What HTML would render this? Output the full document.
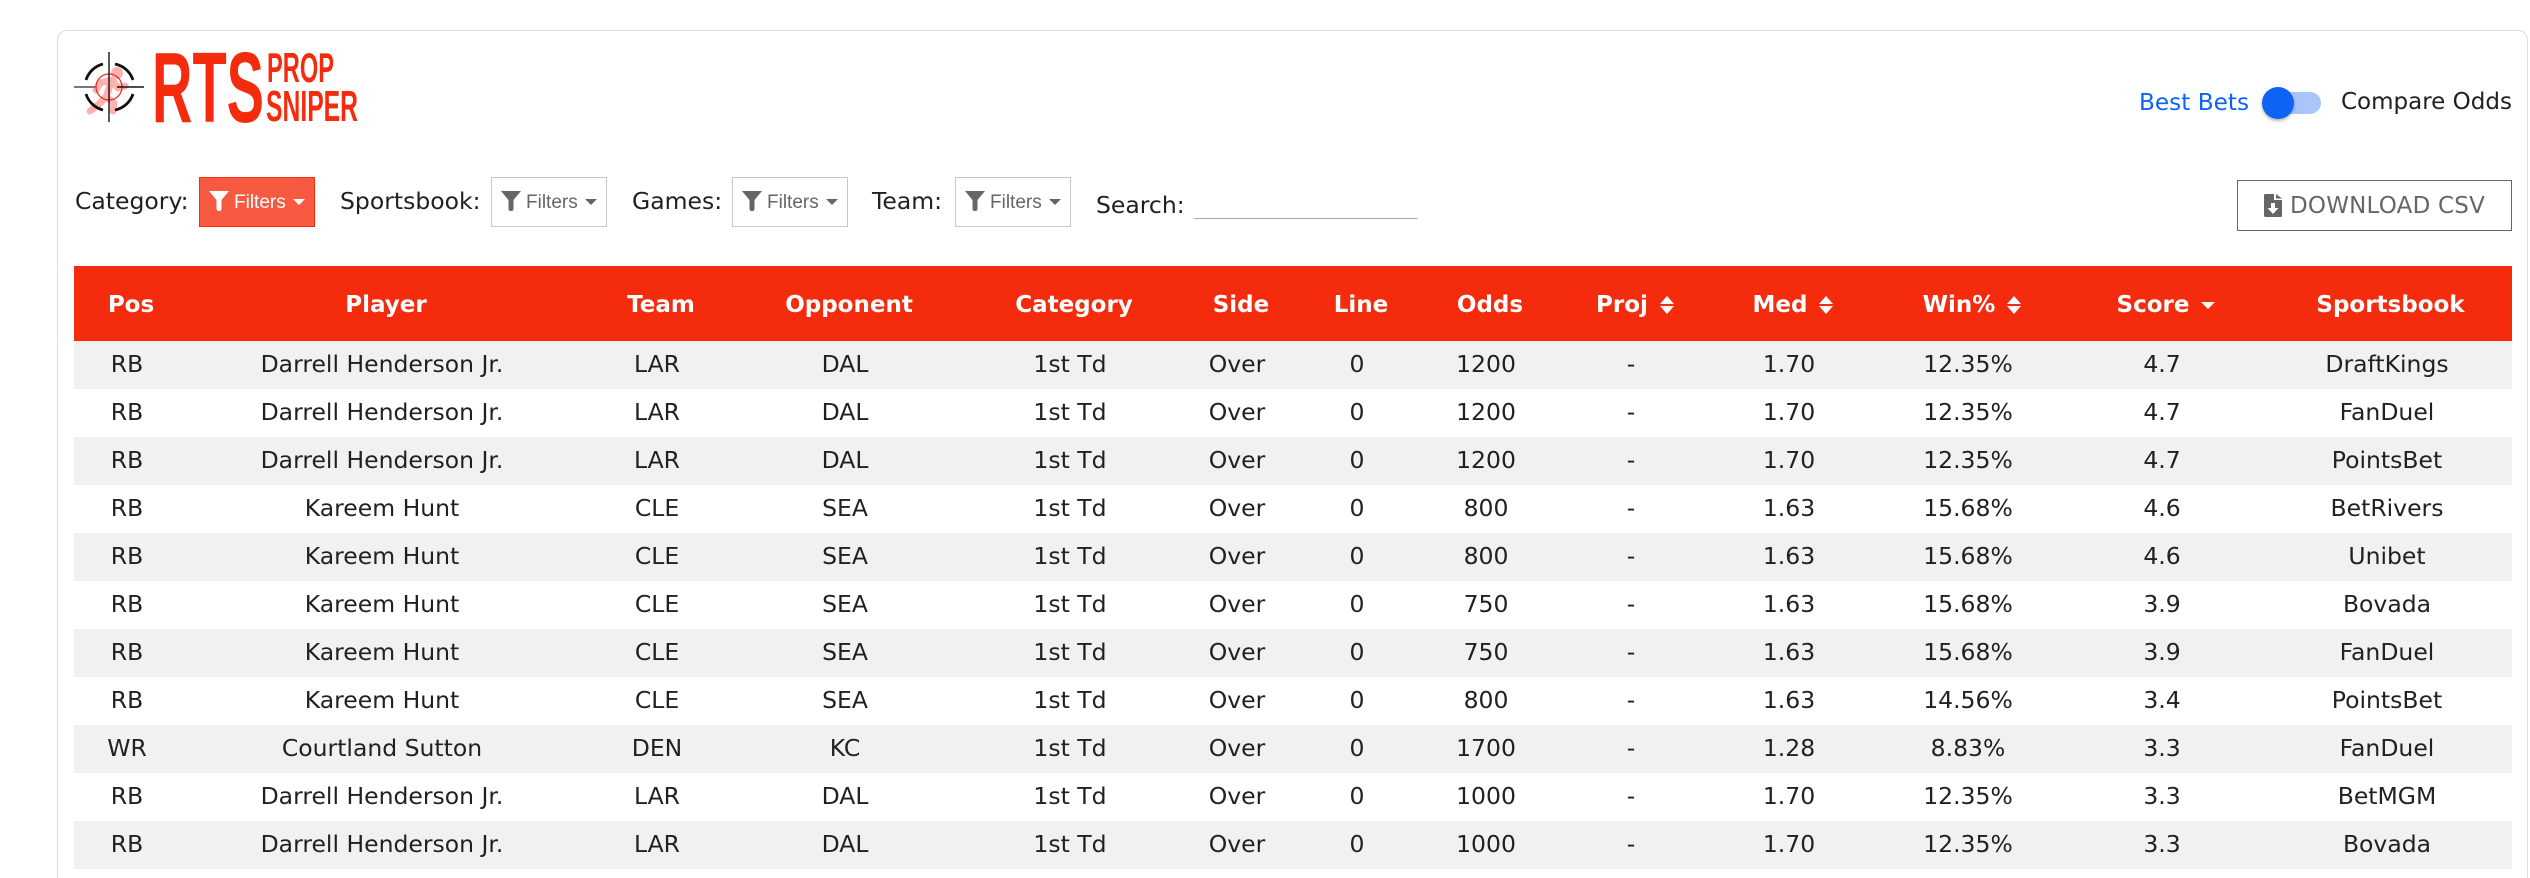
<!DOCTYPE html>
<html><head><meta charset="utf-8"><title>RTS Prop Sniper</title>
<style>
*{box-sizing:border-box}
html,body{margin:0;padding:0;width:2530px;height:878px;background:#fff;overflow:hidden;font-family:"DejaVu Sans","Liberation Sans",sans-serif;color:#212121}
#w{position:absolute;left:0;top:0;width:2530px;height:878px;overflow:hidden;background:#fff}
.card{position:absolute;left:57px;top:30px;width:2471px;height:848px;border:1px solid #ddd;border-bottom:none;border-radius:10px 10px 0 0;background:#fff}
.a{position:absolute;white-space:nowrap;font-size:23.500px;line-height:28px}
.fb{position:absolute;top:177px;width:116px;height:50px;border:1px solid #c6c6c6;background:#fff;color:#666}
.fb.on{background:#f75a41;border-color:#f42b0d;color:#fff}
.fb svg{position:absolute;left:9px;top:13px}
.fb span{position:absolute;left:34px;top:13px;font:19px/24px "Liberation Sans",sans-serif}
.fb i{position:absolute;left:93px;top:21px;width:0;height:0;border-left:6px solid transparent;border-right:6px solid transparent;border-top:6px solid currentColor}
table{position:absolute;left:74px;top:266px;width:2438px;border-collapse:collapse;table-layout:fixed;font-size:23.500px}
th{height:75px;background:#f42b0d;color:#fff;font-weight:700;font-size:23px;padding:2px 0 0 8px;text-align:center;white-space:nowrap}
th:last-child{padding-left:13px}
td{height:48px;padding:0 0 2px;text-align:center;white-space:nowrap;color:#212121}
td:last-child{padding-left:6px}
tbody tr:nth-child(odd) td{background:#f1f1f1}
th svg{vertical-align:-2px;margin-left:12px}
</style></head><body><div id="w">
<div class="card"></div>

<svg class="a" style="left:70px;top:45px" width="300" height="85" viewBox="70 45 300 85">
<g fill="none" stroke="#ffb2ad" stroke-width="7" stroke-linejoin="round" stroke-linecap="round">
<path d="M112 80L106 97M112 80L100 83 96 90M112 80L118 88 125 86M106 97L98 105 90 111M106 97L114 103 113 111"/></g>
<circle cx="117" cy="73" r="6" fill="#ffb2ad"/>
<circle cx="109" cy="87" r="13" fill="none" stroke="#ee2b2b" stroke-width="1.300"/>
<g fill="none" stroke="#111" stroke-width="2.800">
<path d="M86 80a24 24 0 0 1 17-16M115 64a24 24 0 0 1 18 16M133 94a24 24 0 0 1-18 16M103 110a24 24 0 0 1-17-16"/></g>
<path d="M109 52v70" stroke="#111" stroke-width="1.400"/>
<path d="M74 87h22" stroke="#777" stroke-width="2"/><path d="M117 87h27" stroke="#111" stroke-width="1.400"/>
<g fill="#f42b0d" font-family="Liberation Sans,sans-serif">
<text x="152" y="122" font-size="100" font-weight="700" textLength="112" lengthAdjust="spacingAndGlyphs">RTS</text>
<text x="267" y="82" font-size="42" font-weight="700" textLength="67" lengthAdjust="spacingAndGlyphs">PROP</text>
<text x="266" y="121" font-size="44" font-weight="700" textLength="92" lengthAdjust="spacingAndGlyphs">SNIPER</text>
</g></svg>

<div class="a" style="left:2139px;top:89px;color:#0d63f3;font-size:23.200px">Best Bets</div>
<div class="a" style="left:2263px;top:92px;width:58px;height:22px;border-radius:11px;background:#a9c5fb"></div>
<div class="a" style="left:2262px;top:87px;width:32px;height:32px;border-radius:50%;background:#0d63f3;box-shadow:0 2px 3px rgba(0,0,0,.3)"></div>
<div class="a" style="left:2341px;top:88px;font-size:23px">Compare Odds</div>

<div class="a" style="left:75px;top:187px">Category:</div>
<div class="fb on" style="left:199px"><svg width="20" height="20" viewBox="0 0 20 20"><path d="M0 0h20l-7.500 9v9l-1 2h-3l-1-2V9z" fill="currentColor"/></svg><span>Filters</span><i></i></div>
<div class="a" style="left:340px;top:187px">Sportsbook:</div>
<div class="fb" style="left:491px"><svg width="20" height="20" viewBox="0 0 20 20"><path d="M0 0h20l-7.500 9v9l-1 2h-3l-1-2V9z" fill="currentColor"/></svg><span>Filters</span><i></i></div>
<div class="a" style="left:632px;top:187px">Games:</div>
<div class="fb" style="left:732px"><svg width="20" height="20" viewBox="0 0 20 20"><path d="M0 0h20l-7.500 9v9l-1 2h-3l-1-2V9z" fill="currentColor"/></svg><span>Filters</span><i></i></div>
<div class="a" style="left:872px;top:187px">Team:</div>
<div class="fb" style="left:955px"><svg width="20" height="20" viewBox="0 0 20 20"><path d="M0 0h20l-7.500 9v9l-1 2h-3l-1-2V9z" fill="currentColor"/></svg><span>Filters</span><i></i></div>
<div class="a" style="left:1096px;top:191px">Search:</div>
<div class="a" style="left:1194px;top:218px;width:224px;height:1px;background:#aaa"></div>

<div class="a" style="left:2237px;top:180px;width:275px;height:51px;border:1px solid #666"></div>
<svg class="a" style="left:2264px;top:194px" width="18" height="23" viewBox="0 0 18 23"><path d="M0 1.500Q0 0 1.500 0H10v6h8v15.500Q18 23 16.500 23h-15Q0 23 0 21.500z" fill="#666"/><path d="M12 0l6 4.500h-6z" fill="#666"/><path d="M7 9h4v5h3.500L9 20l-5.500-6H7z" fill="#fff"/></svg>
<div class="a" style="left:2290px;top:192px;color:#666;letter-spacing:.2px;font-size:23px">DOWNLOAD CSV</div>

<table>
<colgroup><col style="width:106px"><col style="width:404px"><col style="width:146px"><col style="width:230px"><col style="width:220px"><col style="width:114px"><col style="width:126px"><col style="width:132px"><col style="width:158px"><col style="width:158px"><col style="width:200px"><col style="width:188px"><col style="width:256px"></colgroup>
<thead><tr><th>Pos</th><th>Player</th><th>Team</th><th>Opponent</th><th>Category</th><th>Side</th><th>Line</th><th>Odds</th>
<th>Proj<svg width="14" height="18" viewBox="0 0 14 18"><path d="M7 0l7 8H0zM0 10h14l-7 8z" fill="#fff"/></svg></th>
<th>Med<svg width="14" height="18" viewBox="0 0 14 18"><path d="M7 0l7 8H0zM0 10h14l-7 8z" fill="#fff"/></svg></th>
<th>Win%<svg width="14" height="18" viewBox="0 0 14 18"><path d="M7 0l7 8H0zM0 10h14l-7 8z" fill="#fff"/></svg></th>
<th>Score<svg width="14" height="18" viewBox="0 0 14 18"><path d="M0 6h14l-7 7z" fill="#fff"/></svg></th>
<th>Sportsbook</th></tr></thead>
<tbody>
<tr><td>RB</td><td>Darrell Henderson Jr.</td><td>LAR</td><td>DAL</td><td>1st Td</td><td>Over</td><td>0</td><td>1200</td><td>-</td><td>1.70</td><td>12.35%</td><td>4.7</td><td>DraftKings</td></tr>
<tr><td>RB</td><td>Darrell Henderson Jr.</td><td>LAR</td><td>DAL</td><td>1st Td</td><td>Over</td><td>0</td><td>1200</td><td>-</td><td>1.70</td><td>12.35%</td><td>4.7</td><td>FanDuel</td></tr>
<tr><td>RB</td><td>Darrell Henderson Jr.</td><td>LAR</td><td>DAL</td><td>1st Td</td><td>Over</td><td>0</td><td>1200</td><td>-</td><td>1.70</td><td>12.35%</td><td>4.7</td><td>PointsBet</td></tr>
<tr><td>RB</td><td>Kareem Hunt</td><td>CLE</td><td>SEA</td><td>1st Td</td><td>Over</td><td>0</td><td>800</td><td>-</td><td>1.63</td><td>15.68%</td><td>4.6</td><td>BetRivers</td></tr>
<tr><td>RB</td><td>Kareem Hunt</td><td>CLE</td><td>SEA</td><td>1st Td</td><td>Over</td><td>0</td><td>800</td><td>-</td><td>1.63</td><td>15.68%</td><td>4.6</td><td>Unibet</td></tr>
<tr><td>RB</td><td>Kareem Hunt</td><td>CLE</td><td>SEA</td><td>1st Td</td><td>Over</td><td>0</td><td>750</td><td>-</td><td>1.63</td><td>15.68%</td><td>3.9</td><td>Bovada</td></tr>
<tr><td>RB</td><td>Kareem Hunt</td><td>CLE</td><td>SEA</td><td>1st Td</td><td>Over</td><td>0</td><td>750</td><td>-</td><td>1.63</td><td>15.68%</td><td>3.9</td><td>FanDuel</td></tr>
<tr><td>RB</td><td>Kareem Hunt</td><td>CLE</td><td>SEA</td><td>1st Td</td><td>Over</td><td>0</td><td>800</td><td>-</td><td>1.63</td><td>14.56%</td><td>3.4</td><td>PointsBet</td></tr>
<tr><td>WR</td><td>Courtland Sutton</td><td>DEN</td><td>KC</td><td>1st Td</td><td>Over</td><td>0</td><td>1700</td><td>-</td><td>1.28</td><td>8.83%</td><td>3.3</td><td>FanDuel</td></tr>
<tr><td>RB</td><td>Darrell Henderson Jr.</td><td>LAR</td><td>DAL</td><td>1st Td</td><td>Over</td><td>0</td><td>1000</td><td>-</td><td>1.70</td><td>12.35%</td><td>3.3</td><td>BetMGM</td></tr>
<tr><td>RB</td><td>Darrell Henderson Jr.</td><td>LAR</td><td>DAL</td><td>1st Td</td><td>Over</td><td>0</td><td>1000</td><td>-</td><td>1.70</td><td>12.35%</td><td>3.3</td><td>Bovada</td></tr>
</tbody></table>
</div></body></html>
